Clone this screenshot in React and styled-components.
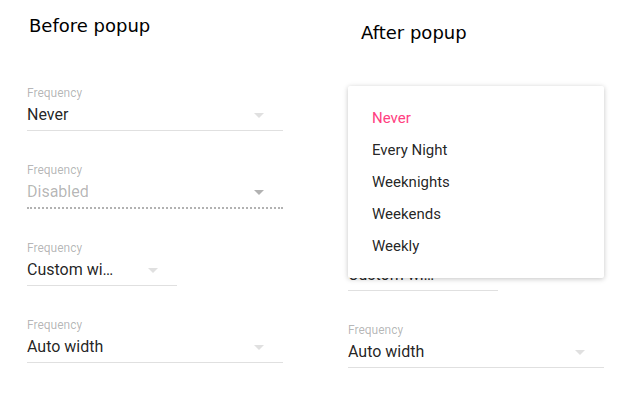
import { createGlobalStyle, styled } from "styled-components"

const GlobalStyle = createGlobalStyle`
body{
    margin:0;
    background:#fff;
    font-family:Roboto, "Liberation Sans", sans-serif;
}
`
const Page = styled.div`
display:flex;
gap:65px;
padding-left:27px;
width:640px;
height:400px;
box-sizing:border-box;
overflow:hidden;
`
const Column = styled.div`
position:relative;
width:256px;
display:flex;
flex-direction:column;
padding-top:${(p) => p.$top}px;
`
const Heading = styled.h3`
margin:0 0 ${(p) => p.$gap}px ${(p) => p.$indent}px;
font-family:"DejaVu Sans", Verdana, sans-serif;
font-size:18px;
font-weight:normal;
line-height:20px;
color:#000;
`
const Fields = styled.div`
display:flex;
flex-direction:column;
gap:31px;
`
const Field = styled.div`
width:${(p) => p.$width || 256}px;
`
const Label = styled.div`
font-size:12px;
line-height:16px;
color:rgba(0,0,0,0.3);
`
const ValueRow = styled.div`
display:flex;
align-items:center;
height:24px;
padding-top:2px;
padding-bottom:3px;
border-bottom:${(p) => (p.$disabled ? "2px dotted rgba(0,0,0,0.3)" : "1px solid #e0e0e0")};
`
const Value = styled.span`
flex:1;
min-width:0;
margin-right:20px;
font-size:16px;
line-height:24px;
color:${(p) => (p.$disabled ? "rgba(0,0,0,0.3)" : "rgba(0,0,0,0.87)")};
white-space:nowrap;
overflow:hidden;
text-overflow:ellipsis;
`
const Arrow = styled.svg`
flex:none;
width:24px;
height:24px;
margin-right:12px;
fill:${(p) => (p.$disabled ? "rgba(0,0,0,0.3)" : "#e0e0e0")};
`
const Menu = styled.ul`
position:absolute;
top:86px;
left:0;
width:256px;
margin:0;
padding:16px 0;
list-style:none;
background:#fff;
border-radius:2px;
box-shadow:rgba(0,0,0,0.12) 0 1px 6px, rgba(0,0,0,0.12) 0 1px 4px;
`
const MenuItem = styled.li`
height:32px;
padding:0 24px;
font-size:15px;
line-height:32px;
color:${(p) => (p.$selected ? "#ff4081" : "rgba(0,0,0,0.87)")};
`

const FIELDS = [
    { value: "Never" },
    { value: "Disabled", disabled: true },
    { value: "Custom width", width: 150 },
    { value: "Auto width" },
]
const OPTIONS = ["Never", "Every Night", "Weeknights", "Weekends", "Weekly"]

function Select({ value, disabled, width }) {
    return (
        <Field $width={width}>
            <Label>Frequency</Label>
            <ValueRow $disabled={disabled}>
                <Value $disabled={disabled}>{value}</Value>
                <Arrow $disabled={disabled} viewBox="0 0 24 24">
                    <path d="M7 10l5 5 5-5z" />
                </Arrow>
            </ValueRow>
        </Field>
    )
}

function FieldList() {
    return (
        <Fields>
            {FIELDS.map((f) => (
                <Select key={f.value} value={f.value} disabled={f.disabled} width={f.width} />
            ))}
        </Fields>
    )
}

export default function App() {
    return (
        <>
            <GlobalStyle />
            <Page>
                <Column $top={16}>
                    <Heading $indent={2} $gap={49}>Before popup</Heading>
                    <FieldList />
                </Column>
                <Column $top={23}>
                    <Heading $indent={13} $gap={47}>After popup</Heading>
                    <FieldList />
                    <Menu>
                        {OPTIONS.map((o) => (
                            <MenuItem key={o} $selected={o === "Never"}>{o}</MenuItem>
                        ))}
                    </Menu>
                </Column>
            </Page>
        </>
    )
}
